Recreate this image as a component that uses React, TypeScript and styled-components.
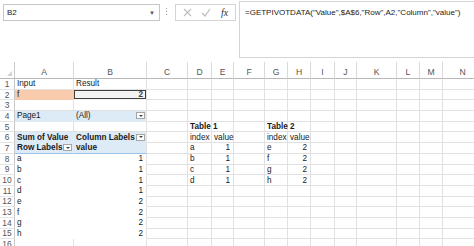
import { Fragment } from "react";
import styled, { createGlobalStyle } from "styled-components";

const GRID = "#e1e1e1";
const BLUE = "#dDEBF7";
const WHITE = "#ffffff";

const GlobalStyle = createGlobalStyle`
    html, body {
        margin: 0;
        padding: 0;
        background: #ffffff;
        overflow: hidden;
    }
    body {
        font-family: "Liberation Sans", Arial, sans-serif;
    }
`;

const Page = styled.div`
    width: 474px;
    height: 246px;
    display: flex;
    flex-direction: column;
    overflow: hidden;
`;

const TopBar = styled.div`
    height: 62px;
    display: flex;
    align-items: flex-start;
    flex-shrink: 0;
`;

const NameBox = styled.div`
    margin: 4px 0 0 3px;
    width: 157px;
    height: 17px;
    box-sizing: border-box;
    border: 1px solid #c6c6c6;
    display: flex;
    align-items: center;
    padding: 0 4px 0 3px;
    font-size: 8px;
    color: #222;
`;

const Caret = styled.span`
    margin-left: auto;
    font-size: 6px;
    color: #555;
`;

const Dots = styled.div`
    margin: 8px 0 0 5px;
    width: 3px;
    display: flex;
    flex-direction: column;
    align-items: center;
    gap: 2px;

    & span {
        width: 1px;
        height: 1px;
        background: #9a9a9a;
    }
`;

const FxButtons = styled.div`
    margin: 4px 0 0 7px;
    width: 61px;
    height: 17px;
    box-sizing: border-box;
    border: 1px solid #d4d4d4;
    display: flex;
    align-items: center;
    justify-content: space-around;
    padding: 0 2px;
`;

const FxLabel = styled.span`
    font-family: "Liberation Serif", "Times New Roman", serif;
    font-style: italic;
    font-size: 10px;
    color: #333;
`;

const FormulaBox = styled.div`
    margin: 1px 0 0 3px;
    flex: 1;
    height: 57px;
    box-sizing: border-box;
    border: 1px solid #d4d4d4;
    border-right: none;
    padding: 6px 0 0 5px;
    font-size: 8px;
    color: #222;
    white-space: nowrap;
    overflow: hidden;
`;

const cols = [15, 59, 73, 41, 24, 22, 31, 23, 23, 24, 22, 40, 23, 23, 40];
const letters = ["", "A", "B", "C", "D", "E", "F", "G", "H", "I", "J", "K", "L", "M", "N"];

const Sheet = styled.div`
    display: grid;
    grid-template-columns: ${cols.map((c) => `${c}px`).join(" ")};
    grid-template-rows: 17px;
    grid-auto-rows: 10.7px;
    font-size: 8.2px;
    color: #1a1a1a;
`;

const Corner = styled.div`
    position: relative;
    box-sizing: border-box;
    border-right: 1px solid #c8c8c8;
    border-bottom: 1px solid #b8b8b8;

    &::after {
        content: "";
        position: absolute;
        right: 2px;
        bottom: 2px;
        border-left: 5px solid transparent;
        border-bottom: 5px solid #d0d0d0;
    }
`;

const ColHead = styled.div`
    box-sizing: border-box;
    border-right: 1px solid #dadada;
    border-bottom: 1px solid #b8b8b8;
    display: flex;
    align-items: center;
    justify-content: center;
    padding-top: 3px;
    color: #555;
    font-size: 8.6px;
`;

const RowHead = styled.div`
    box-sizing: border-box;
    border-right: 1px solid #c8c8c8;
    border-bottom: 1px solid #e4e4e4;
    display: flex;
    align-items: center;
    justify-content: center;
    color: #555;
    font-size: 8.4px;
`;

const Cell = styled.div<{
    $fill?: string;
    $num?: boolean;
    $bold?: boolean;
    $edge?: boolean;
    $rule?: boolean;
    $boxed?: boolean;
}>`
    box-sizing: border-box;
    min-width: 0;
    display: flex;
    align-items: center;
    justify-content: ${({ $num }) => ($num ? "flex-end" : "flex-start")};
    padding: 0 3px 0 2px;
    white-space: nowrap;
    background: ${({ $fill }) => $fill ?? "transparent"};
    font-weight: ${({ $bold }) => ($bold ? 700 : 400)};
    border-right: 1px solid ${({ $fill, $edge }) => ($fill && !$edge ? $fill : GRID)};
    border-bottom: 1px solid
        ${({ $fill, $rule }) => ($rule ? "#9bc2e6" : $fill ?? GRID)};
    box-shadow: ${({ $boxed }) => ($boxed ? "inset 0 0 0 1px #3f3f3f" : "none")};
    color: ${({ $boxed }) => ($boxed ? "#3f3f3f" : "inherit")};
`;

const DropButton = styled.span`
    margin-left: auto;
    margin-right: -2px;
    width: 9px;
    height: 7px;
    box-sizing: border-box;
    border: 1px solid #a6a6a6;
    background: #fdfdfd;
    display: flex;
    align-items: center;
    justify-content: center;

    &::after {
        content: "";
        border-left: 2px solid transparent;
        border-right: 2px solid transparent;
        border-top: 2px solid #444;
    }
`;

type Spec = {
    v?: string;
    bold?: boolean;
    num?: boolean;
    fill?: string;
    drop?: boolean;
    edge?: boolean;
    rule?: boolean;
    boxed?: boolean;
};

const rows: Record<number, Record<string, Spec>> = {
    1: { A: { v: "Input" }, B: { v: "Result" } },
    2: {
        A: { v: "f", fill: "#f8cbad" },
        B: { v: "2", num: true, bold: true, fill: "#f2f2f2", boxed: true, edge: true },
    },
    4: {
        A: { v: "Page1", fill: BLUE },
        B: { v: "(All)", fill: BLUE, drop: true, edge: true },
    },
    5: { D: { v: "Table 1", bold: true }, G: { v: "Table 2", bold: true } },
    6: {
        A: { v: "Sum of Value", bold: true, fill: BLUE },
        B: { v: "Column Labels", bold: true, fill: BLUE, drop: true, edge: true },
        D: { v: "index" },
        E: { v: "value" },
        G: { v: "index" },
        H: { v: "value" },
    },
    7: {
        A: { v: "Row Labels", bold: true, fill: BLUE, drop: true, rule: true },
        B: { v: "value", bold: true, fill: BLUE, rule: true, edge: true },
    },
};

// pivot body rows 8..15
const pivot = ["a", "b", "c", "d", "e", "f", "g", "h"];
const pivotVals = ["1", "1", "1", "1", "2", "2", "2", "2"];
pivot.forEach((k, i) => {
    rows[8 + i] = {
        A: { v: k, fill: WHITE },
        B: { v: pivotVals[i], num: true, fill: WHITE, edge: true },
    };
});

// Table 1 / Table 2 bodies, rows 7..10
["a", "b", "c", "d"].forEach((k, i) => {
    rows[7 + i].D = { v: k };
    rows[7 + i].E = { v: "1", num: true };
    rows[7 + i].G = { v: pivot[4 + i] };
    rows[7 + i].H = { v: "2", num: true };
});

function XIcon() {
    return (
        <svg width="9" height="9" viewBox="0 0 9 9">
            <path d="M1 1 L8 8 M8 1 L1 8" stroke="#bdbdbd" strokeWidth="1.1" fill="none" />
        </svg>
    );
}

function CheckIcon() {
    return (
        <svg width="10" height="9" viewBox="0 0 10 9">
            <path d="M1 5 L4 8 L9 1" stroke="#bdbdbd" strokeWidth="1.2" fill="none" />
        </svg>
    );
}

export default function App() {
    const rowNums = Array.from({ length: 16 }, (_, i) => i + 1);

    return (
        <Page>
            <GlobalStyle />
            <TopBar>
                <NameBox>
                    B2
                    <Caret>▼</Caret>
                </NameBox>
                <Dots>
                    <span />
                    <span />
                    <span />
                </Dots>
                <FxButtons>
                    <XIcon />
                    <CheckIcon />
                    <FxLabel>fx</FxLabel>
                </FxButtons>
                <FormulaBox>=GETPIVOTDATA("Value",$A$6,"Row",A2,"Column","value")</FormulaBox>
            </TopBar>

            <Sheet>
                <Corner />
                {letters.slice(1).map((l) => (
                    <ColHead key={l}>{l}</ColHead>
                ))}

                {rowNums.map((r) => (
                    <Fragment key={r}>
                        <RowHead>{r}</RowHead>
                        {letters.slice(1).map((l) => {
                            const s = rows[r]?.[l] ?? {};
                            return (
                                <Cell
                                    key={l}
                                    $fill={s.fill}
                                    $num={s.num}
                                    $bold={s.bold}
                                    $edge={s.edge}
                                    $rule={s.rule}
                                    $boxed={s.boxed}
                                >
                                    {s.v}
                                    {s.drop && <DropButton />}
                                </Cell>
                            );
                        })}
                    </Fragment>
                ))}
            </Sheet>
        </Page>
    );
}
